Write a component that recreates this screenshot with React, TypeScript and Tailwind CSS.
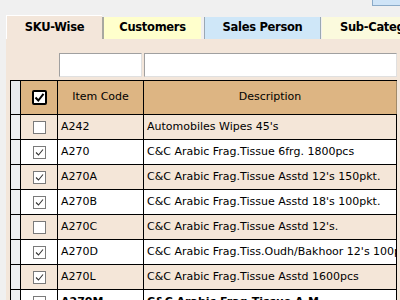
import React from 'react';

const rows = [
  { code: 'A242', desc: "Automobiles Wipes 45's", checked: false },
  { code: 'A270', desc: 'C&C Arabic Frag.Tissue 6frg. 1800pcs', checked: true },
  { code: 'A270A', desc: "C&C Arabic Frag.Tissue Asstd 12's 150pkt.", checked: true },
  { code: 'A270B', desc: "C&C Arabic Frag.Tissue Asstd 18's 100pkt.", checked: true },
  { code: 'A270C', desc: "C&C Arabic Frag.Tissue Asstd 12's.", checked: false },
  { code: 'A270D', desc: "C&C Arabic Frag.Tiss.Oudh/Bakhoor 12's 100pcs", checked: true },
  { code: 'A270L', desc: 'C&C Arabic Frag.Tissue Asstd 1600pcs', checked: true },
  { code: 'A270M', desc: 'C&C Arabic Frag.Tissue A.M.', checked: false, bold: true },
];

function RowCheck({ checked }: { checked: boolean }) {
  return (
    <div className="w-[13px] h-[13px] border border-[#7a7a7a] bg-white flex items-center justify-center">
      {checked && (
        <svg width="11" height="11" viewBox="0 0 11 11">
          <path d="M2 5.5 L4.5 8 L9 2.5" fill="none" stroke="#333" strokeWidth="1.1" />
        </svg>
      )}
    </div>
  );
}

export default function App() {
  return (
    <div className="w-[400px] h-[300px] overflow-hidden bg-[#f0f0f0] flex flex-col font-['DejaVu_Sans',sans-serif] text-black">
      {/* top strip */}
      <div className="h-[15px] shrink-0 flex justify-end items-start">
        <div className="w-[28px] h-[6px] bg-[#cfe4f7] border border-t-0 border-r-0 border-[#8aaac8]" />
      </div>

      {/* tabs */}
      <div className="flex items-end h-[24px] shrink-0 pl-[6px] text-[11.5px] font-bold tracking-[-0.3px]">
        <div className="w-[96px] h-[24px] bg-[#f3e6da] border-t border-l border-white flex items-center justify-center">
          SKU-Wise
        </div>
        <div className="w-[99px] h-[22px] bg-[#ffffcc] border-l-2 border-[#a8a8a0] flex items-center justify-center">
          Customers
        </div>
        <div className="ml-[3px] w-[117px] h-[22px] bg-[#cfe7f8] border-x border-[#9aa8b4] flex items-center justify-center">
          Sales Person
        </div>
        <div className="ml-[1px] flex-1 h-[22px] bg-[#fbfadd] flex items-center pl-[18px] whitespace-nowrap overflow-hidden">
          Sub-Category
        </div>
      </div>

      {/* panel */}
      <div className="flex-1 min-h-0 ml-[6px] bg-[#f3e6da] pl-[4px] pt-[14px] overflow-hidden">
        <div className="flex h-[24px] pl-[49px] gap-[2px] pr-[3px]">
          <div className="w-[83px] h-[24px] bg-white border border-[#a0a0a0] border-r-[#e0e0e0] border-b-[#e0e0e0]" />
          <div className="flex-1 h-[24px] bg-white border border-[#a0a0a0] border-r-[#e0e0e0] border-b-[#e0e0e0]" />
        </div>

        <div className="mt-[3px] mr-[3px] border-t border-l border-black text-[11px]">
          {/* header */}
          <div className="flex h-[34px] border-b border-black">
            <div className="w-[10px] bg-[#e8ebee] border-r border-black" />
            <div className="w-[37px] bg-[#ddb583] border-r border-black flex items-center justify-center">
              <div className="w-[15px] h-[15px] border-2 border-black rounded-[2px] bg-white flex items-center justify-center">
                <svg width="11" height="11" viewBox="0 0 11 11">
                  <path d="M1.5 5.5 L4.3 8.5 L9.5 1.8" fill="none" stroke="#000" strokeWidth="2" />
                </svg>
              </div>
            </div>
            <div className="w-[86px] bg-[#ddb583] border-r border-black flex items-center justify-center">
              Item Code
            </div>
            <div className="flex-1 bg-[#ddb583] border-r border-[#a08a6a] flex items-center justify-center">
              Description
            </div>
          </div>

          {rows.map((r, i) => (
            <div
              key={r.code}
              className={`flex h-[25px] border-b border-black ${i % 2 === 0 ? 'bg-[#f4e6d8]' : 'bg-white'} ${r.bold ? 'font-bold' : ''}`}
            >
              <div className="w-[10px] bg-[#eef0f2] border-r border-black" />
              <div className="w-[37px] border-r border-black flex items-center justify-center">
                <RowCheck checked={r.checked} />
              </div>
              <div className="w-[86px] border-r border-black flex items-center pl-[3px] whitespace-nowrap overflow-hidden">
                {r.code}
              </div>
              <div className="flex-1 border-r border-black flex items-center pl-[3px] whitespace-nowrap overflow-hidden">
                {r.desc}
              </div>
            </div>
          ))}
        </div>
      </div>
    </div>
  );
}
